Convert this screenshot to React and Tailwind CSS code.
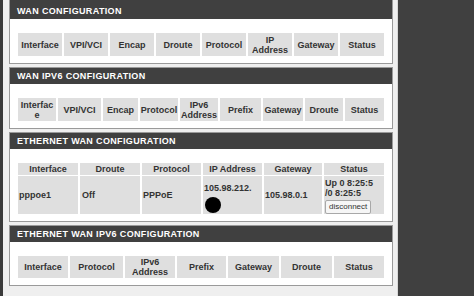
import React from 'react';

const font = "font-['Liberation_Sans',Arial,sans-serif]";
const cellBase = "bg-[#dfdfdf] flex items-center justify-center text-center font-bold text-[9px] leading-[10px] text-[#333]";

const Panel = ({ title, first, children }) => (
  <section className={`bg-white border border-[#9a9a9a] ${first ? 'border-t-0' : ''}`}>
    <div className={`bg-[#404040] flex items-center pl-[7px] ${first ? 'h-[19px] pt-[3px]' : 'h-[16px]'}`}>
      <h3 className="text-white font-bold text-[9px] tracking-[0.35px] leading-none uppercase">{title}</h3>
    </div>
    <div className="pt-[14px] pb-[7px] px-[8px]">{children}</div>
  </section>
);

const HeaderRow = ({ cols, widths, height }) => (
  <div className="grid gap-[2px]" style={{ gridTemplateColumns: widths.map(w => `${w}px`).join(' ') }}>
    {cols.map((c, i) => (
      <div key={i} className={`${cellBase} ${height}`}>{c}</div>
    ))}
  </div>
);

export default function App() {
  return (
    <div className={`w-[474px] h-[296px] flex overflow-hidden bg-[#404040] ${font}`}>
      <div className="w-[3px] bg-[#3a3a3a]" />
      <div className="w-[395px] bg-[#efefef] pl-[6px] pr-[4px] border-r border-[#d8d8d8] flex flex-col gap-[3px]">
        <Panel title="WAN Configuration" first>
          <HeaderRow
            height="h-[23px]"
            widths={[44, 44, 44, 44, 44, 44, 44, 44]}
            cols={['Interface', 'VPI/VCI', 'Encap', 'Droute', 'Protocol', <>IP<br />Address</>, 'Gateway', 'Status']}
          />
        </Panel>

        <Panel title="WAN IPv6 Configuration">
          <HeaderRow
            height="h-[23px]"
            widths={[38, 43, 35, 38, 38, 41, 40, 38, 39]}
            cols={[<>Interfac<br />e</>, 'VPI/VCI', 'Encap', 'Protocol', <>IPv6<br />Address</>, 'Prefix', 'Gateway', 'Droute', 'Status']}
          />
        </Panel>

        <Panel title="Ethernet WAN Configuration">
          <div className="flex flex-col gap-[1px]">
            <HeaderRow
              height="h-[12px]"
              widths={[60, 60, 59, 59, 58, 60]}
              cols={['Interface', 'Droute', 'Protocol', 'IP Address', 'Gateway', 'Status']}
            />
            <div className="grid gap-[2px] grid-cols-[60px_60px_59px_59px_58px_60px] h-[38px] text-[9px] font-bold text-[#333] leading-[10px]">
              <div className="bg-[#dfdfdf] flex items-center pl-[1px]">pppoe1</div>
              <div className="bg-[#dfdfdf] flex items-center pl-[2px]">Off</div>
              <div className="bg-[#dfdfdf] flex items-center pl-[1px]">PPPoE</div>
              <div className="bg-[#dfdfdf] flex flex-col items-start pt-[7px] pl-[1px]">
                <span>105.98.212.</span>
                <span className="mt-[4px] ml-[1px] w-[16px] h-[16px] rounded-full bg-black" />
              </div>
              <div className="bg-[#dfdfdf] flex items-center pl-[1px]">105.98.0.1</div>
              <div className="bg-[#dfdfdf] flex flex-col items-start pt-[2px] pl-[1px]">
                <span>Up 0 8:25:5</span>
                <span>/0 8:25:5</span>
                <button className="mt-[2px] h-[14px] px-[3px] bg-[#f6f6f6] border border-[#a8a8a8] rounded-[2px] text-[8px] font-normal text-[#333] leading-none">
                  disconnect
                </button>
              </div>
            </div>
          </div>
        </Panel>

        <Panel title="Ethernet WAN IPv6 Configuration">
          <HeaderRow
            height="h-[22px]"
            widths={[50, 53, 50, 49, 51, 51, 50]}
            cols={['Interface', 'Protocol', <>IPv6<br />Address</>, 'Prefix', 'Gateway', 'Droute', 'Status']}
          />
        </Panel>
      </div>
      <div className="flex-1 bg-[#404040]" />
    </div>
  );
}
